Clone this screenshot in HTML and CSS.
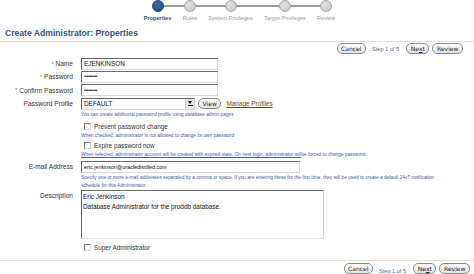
FILE: index.html
```html
<!DOCTYPE html>
<html>
<head>
<meta charset="utf-8">
<title>Create Administrator: Properties</title>
<link rel="stylesheet" href="styles.css">
</head>
<body>
<div class="page">
  <div class="train">
    <div class="step current s1"><span class="dot"></span><span class="step-label">Properties</span></div>
    <div class="step s2"><span class="dot"></span><span class="step-label">Roles</span></div>
    <div class="step s3"><span class="dot"></span><span class="step-label">System Privileges</span></div>
    <div class="step s4"><span class="dot"></span><span class="step-label">Target Privileges</span></div>
    <div class="step s5"><span class="dot"></span><span class="step-label">Review</span></div>
  </div>

  <h1 class="title">Create Administrator: Properties</h1>

  <div class="actions top">
    <button class="btn">Cancel</button>
    <span class="step-count">Step 1 of 5</span>
    <button class="btn">Ne<u>x</u>t</button>
    <button class="btn">Review</button>
  </div>

  <div class="form">
    <label class="lbl"><span class="req">*</span>&nbsp;Name</label>
    <div class="fld"><input class="text" type="text" value="EJENKINSON"></div>

    <label class="lbl"><span class="req">*</span>&nbsp;Password</label>
    <div class="fld"><input class="text" type="password" value="xxxxxxxxxx"></div>

    <label class="lbl"><span class="req">*</span>&nbsp;Confirm Password</label>
    <div class="fld"><input class="text" type="password" value="xxxxxxxxxx"></div>

    <label class="lbl">Password Profile</label>
    <div class="fld">
      <div class="select"><span class="select-val">DEFAULT</span><span class="select-arrow"><span class="tri"></span><span class="bar"></span></span></div>
      <button class="btn view">View</button>
      <a class="link" href="#">Manage Profiles</a>
    </div>

    <div class="help fld2">You can create additional password profile using database admin pages</div>

    <div class="fld fld2"><label class="cb"><input type="checkbox"><span>Prevent password change</span></label></div>

    <div class="help fld2">When checked, administrator is not allowed to change its own password</div>

    <div class="fld fld2"><label class="cb"><input type="checkbox"><span>Expire password now</span></label></div>

    <div class="help fld2"><span class="uline">When selected, administrator account will be created with expired state. On next login, administrator will</span> be forced to change password.</div>

    <label class="lbl">E-mail Address</label>
    <div class="fld"><input class="text email" type="text" value="eric.jenkinson@oracledistilled.com"></div>

    <div class="help two fld2">Specify one or more e-mail addresses separated by a comma or space. If you are entering these for the first time, they will be used to create a default 24x7 notification<br>schedule for this Administrator</div>

    <label class="lbl top-lbl">Description</label>
    <div class="fld top-fld"><textarea class="area">Eric Jenkinson
Database Administrator for the proddb database.</textarea></div>

    <div class="fld fld2"><label class="cb"><input type="checkbox"><span>Super Administrator</span></label></div>
  </div>

  <div class="actions bottom">
    <button class="btn">Cancel</button>
    <span class="step-count">Step 1 of 5</span>
    <button class="btn">Ne<u>x</u>t</button>
    <button class="btn">Review</button>
  </div>
</div>
</body>
</html>
```

FILE: styles.css
```css
* { box-sizing: border-box; }

html, body {
  margin: 0;
  padding: 0;
  background: #ffffff;
}

.page {
  width: 474px;
  height: 274px;
  overflow: hidden;
  font-family: "Liberation Sans", Arial, sans-serif;
  color: #333333;
}

/* ---------- train ---------- */
.train {
  position: relative;
  display: flex;
  gap: 10px;
  margin-left: 143px;
  width: 192px;
}
.train::before {
  content: "";
  position: absolute;
  left: 15px;
  right: 9px;
  top: 5px;
  height: 2px;
  background: #9d9d9d;
}
.step {
  position: relative;
  display: flex;
  flex-direction: column;
  align-items: center;
}
.s1 { width: 29px; }
.s2 { width: 16px; }
.s3 { width: 45px; }
.s4 { width: 44px; }
.s5 { width: 18px; }
.dot {
  width: 12px;
  height: 12px;
  border-radius: 50%;
  background: radial-gradient(circle at 40% 35%, #e2e2e2, #c4c4c4);
  border: 1px solid #a9a9a9;
}
.current .dot {
  background: radial-gradient(circle at 40% 35%, #3d6aa5, #234a82);
  border-color: #1e3f70;
}
.step-label {
  margin-top: 2.5px;
  font-size: 5.6px;
  line-height: 7px;
  color: #9a9a9a;
  white-space: nowrap;
}
.current .step-label {
  color: #2d4d7c;
  font-weight: bold;
}

/* ---------- title ---------- */
.title {
  margin: 6.5px 0 0 5px;
  font-size: 8.6px;
  line-height: 10px;
  font-weight: bold;
  color: #34527e;
  border-bottom: 1px solid #e4e0cf;
  padding-bottom: 3px;
  margin-left: 0;
  padding-left: 5px;
}

/* ---------- action bars ---------- */
.actions {
  display: flex;
  justify-content: flex-end;
  align-items: center;
  gap: 3px;
  height: 11px;
}
.actions.top {
  margin-top: 1px;
  padding-right: 11px;
}
.actions.bottom {
  margin-top: 0;
  padding-right: 4px;
  border-top: 1px solid #e4e0cf;
  padding-top: 0;
  height: 14px;
  align-items: flex-end;
}
.step-count {
  margin: 0 4px 0 3px;
  font-size: 5.6px;
  color: #4a6aa5;
}
.btn {
  height: 11px;
  padding: 0 3.6px;
  margin: 0;
  font-family: "DejaVu Sans", sans-serif;
  font-size: 6px;
  line-height: 9px;
  color: #222222;
  border: 1px solid #8c8c8c;
  border-radius: 5px;
  background: linear-gradient(#ffffff, #e2e2e2);
  display: inline-flex;
  align-items: center;
}
.btn u { text-decoration: underline; }

/* ---------- form ---------- */
.form {
  display: grid;
  grid-template-columns: 73px 393px;
  grid-template-rows: 13px 13px 14px 13px 10px 12px 8px 11px 8px 15px 16px 50px 14px;
  column-gap: 8px;
  margin-top: 3px;
  margin-bottom: 6px;
}
.lbl {
  grid-column: 1;
  display: flex;
  align-items: center;
  justify-content: flex-end;
  font-size: 6.6px;
  color: #333333;
  white-space: nowrap;
}
.req {
  color: #666666;
  font-size: 5px;
}
.fld {
  grid-column: 2;
  display: flex;
  align-items: center;
}
.fld2 { grid-column: 2; }
.top-lbl { align-items: flex-start; padding-top: 2px; }
.top-fld { align-items: flex-start; }

.text {
  width: 137px;
  height: 12px;
  padding: 0 2px;
  margin: 0;
  font-family: "Liberation Sans", Arial, sans-serif;
  font-size: 6.4px;
  color: #111111;
  border: 1px solid;
  border-color: #6a6a6a #d8d8d8 #d8d8d8 #6a6a6a;
  background: #ffffff;
  outline: none;
}
.text[type="password"] {
  font-size: 4.6px;
  letter-spacing: -0.3px;
}
.email {
  width: 219px;
  font-size: 5.4px;
}

.select {
  width: 114px;
  height: 12px;
  display: flex;
  align-items: center;
  border: 1px solid;
  border-color: #6a6a6a #d8d8d8 #d8d8d8 #6a6a6a;
  font-size: 6.4px;
  color: #111111;
}
.select-val {
  flex: 1;
  padding-left: 2px;
}
.select-arrow {
  width: 9px;
  height: 10px;
  display: flex;
  flex-direction: column;
  align-items: center;
  justify-content: center;
  gap: 1px;
  background: #e8e8e8;
  border-left: 1px solid #c8c8c8;
}
.tri {
  width: 0;
  height: 0;
  border-left: 2.5px solid transparent;
  border-right: 2.5px solid transparent;
  border-top: 3px solid #111111;
}
.bar {
  width: 5px;
  height: 1px;
  background: #111111;
}
.view {
  margin-left: 3px;
}
.link {
  margin-left: 5px;
  font-size: 6.4px;
  color: #6b4a1c;
  text-decoration: underline;
}

.help {
  display: flex;
  align-items: center;
  font-size: 4.8px;
  line-height: 8px;
  color: #4262a3;
  white-space: nowrap;
}
.help.two {
  display: block;
}
.uline {
  text-decoration: underline;
  text-decoration-color: #4262a3;
}

.cb {
  display: flex;
  align-items: center;
  margin-left: 3px;
  font-size: 6.4px;
  color: #333333;
}
.cb input {
  -webkit-appearance: none;
  appearance: none;
  width: 7px;
  height: 7px;
  margin: 0 3px 0 0;
  border: 1px solid;
  border-color: #7a7a7a #dcdcdc #dcdcdc #7a7a7a;
  background: #ffffff;
}

.area {
  width: 243px;
  height: 49px;
  margin: 0;
  padding: 1px 1px;
  font-family: "Liberation Sans", Arial, sans-serif;
  font-size: 6.4px;
  line-height: 9.6px;
  color: #111111;
  border: 1px solid;
  border-color: #6a6a6a #cfcfcf #e6e6e6 #6a6a6a;
  resize: none;
  overflow: hidden;
  outline: none;
}
```
